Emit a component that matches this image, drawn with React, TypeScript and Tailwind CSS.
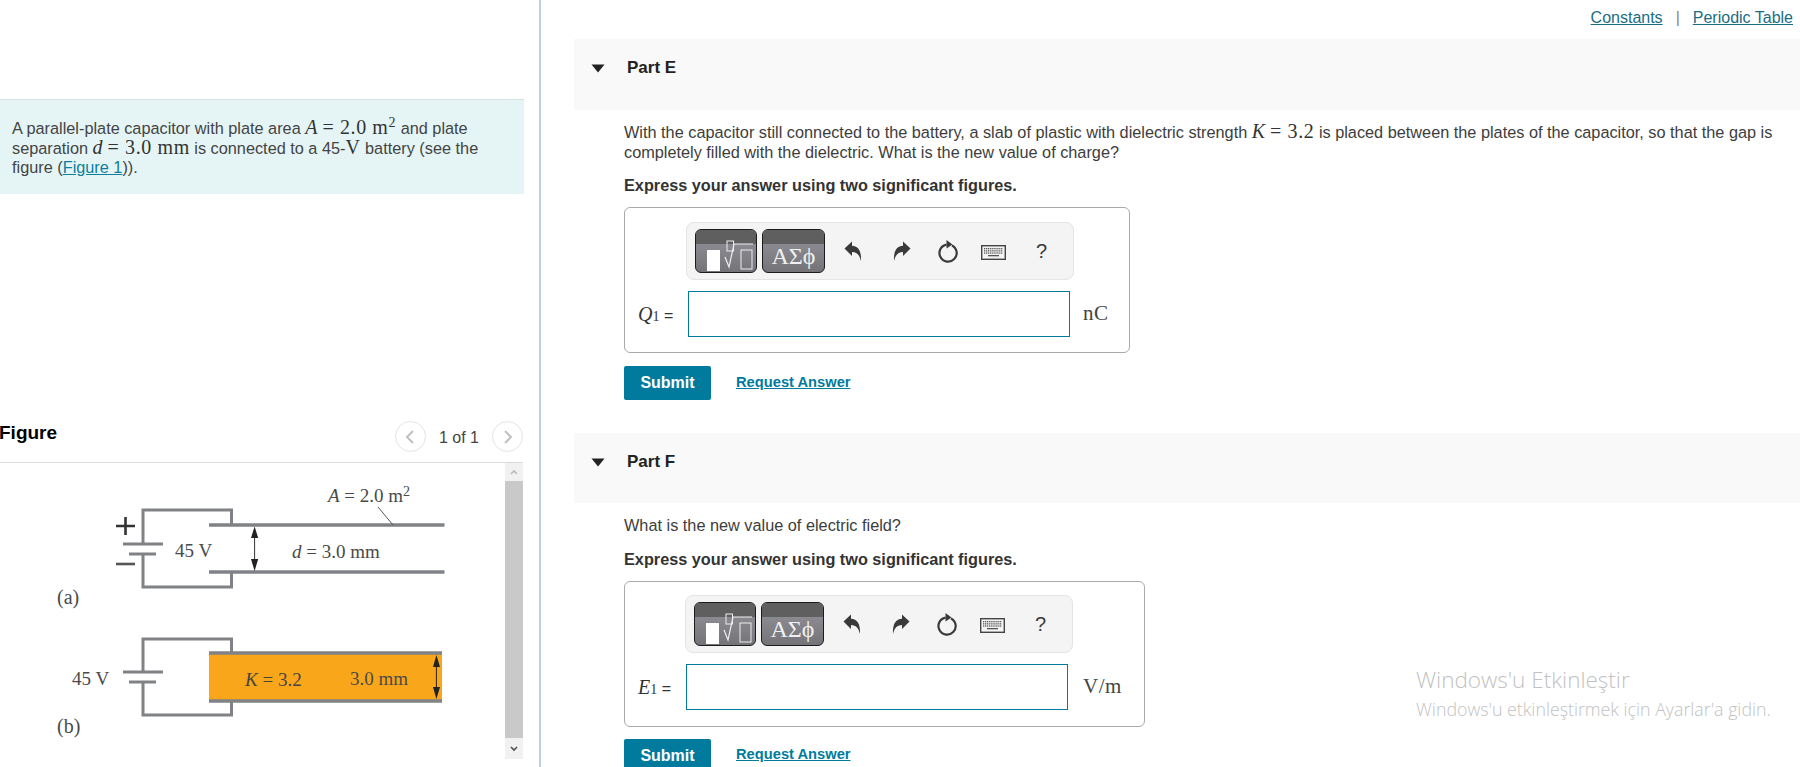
import React from "react";

const Mi = ({ children }: { children: React.ReactNode }) => (
  <span className="italic font-['Liberation_Serif',serif] text-[20px] leading-[0] tracking-[0.5px] text-[#333]">{children}</span>
);
const Mn = ({ children }: { children: React.ReactNode }) => (
  <span className="font-['Liberation_Serif',serif] text-[20px] leading-[0] tracking-[0.6px] text-[#333]">{children}</span>
);

function Undo({ flip = false }: { flip?: boolean }) {
  return (
    <svg width="18" height="22" viewBox="0 0 18 22" className={flip ? "-scale-x-100" : ""}>
      <path d="M0.5 8.5 L8 1.5 V5.8 C14 6 17.5 10.5 17 21 C15.5 15 13 12.2 8 12 V16 Z" fill="#3a3a3a" />
    </svg>
  );
}

function Refresh() {
  return (
    <svg width="22" height="24" viewBox="0 0 22 24">
      <path d="M9.5 5.6 A8.6 8.6 0 1 0 15 6.4" fill="none" stroke="#3a3a3a" strokeWidth="2.2" />
      <path d="M9.5 1 L15.5 5.6 L9.5 9.5 Z" fill="#3a3a3a" />
    </svg>
  );
}

function Keyboard() {
  const dots = [];
  for (let r = 0; r < 3; r++) {
    for (let c = 0; c < 10; c++) {
      dots.push(<rect key={r + "-" + c} x={3 + c * 1.9} y={3 + r * 2.2} width="1.2" height="1.3" fill="#555" />);
    }
  }
  return (
    <svg width="25" height="15" viewBox="0 0 25 15">
      <rect x="0.7" y="0.7" width="23.6" height="13.6" fill="#f4f4f4" stroke="#444" strokeWidth="1.4" />
      {dots}
      <rect x="7" y="10" width="11" height="1.3" fill="#555" />
    </svg>
  );
}

function Toolbar({ ml }: { ml: string }) {
  return (
    <div className={`flex items-center h-[58px] w-[388px] rounded-[8px] border border-[#e4e4e4] bg-[#f4f4f4] pl-[8px] ${ml}`}>
      <div className="relative w-[62px] h-[44px] rounded-[6px] border border-[#1c1c1c] bg-gradient-to-b from-[#96959d] to-[#747478] overflow-hidden">
        <div className="h-[14px] bg-[#5f5f5f]" />
        <svg width="60" height="42" viewBox="0 0 60 42" className="absolute left-0 top-0">
          <rect x="11" y="20" width="13" height="21" fill="#fff" />
          <rect x="31" y="11" width="6.5" height="10" fill="none" stroke="#eee" strokeWidth="1" />
          <path d="M29 27 L33 37 L38 14 H57" fill="none" stroke="#eee" strokeWidth="1.2" />
          <rect x="45" y="20" width="11" height="19" fill="none" stroke="#eee" strokeWidth="1" />
        </svg>
      </div>
      <div className="relative ml-[5px] w-[63px] h-[44px] rounded-[6px] border border-[#1c1c1c] bg-gradient-to-b from-[#96959d] to-[#747478] overflow-hidden">
        <div className="h-[14px] bg-[#5f5f5f]" />
        <span className="absolute left-0 right-0 top-[12px] text-center text-[24px] leading-[28px] text-[#f0f0f0] font-['Liberation_Serif',serif]">ΑΣϕ</span>
      </div>
      <div className="ml-[19px] w-[18px] flex justify-center"><Undo /></div>
      <div className="ml-[31px] w-[18px] flex justify-center"><Undo flip /></div>
      <div className="ml-[26px] w-[22px] flex justify-center"><Refresh /></div>
      <div className="ml-[22px] w-[25px] flex justify-center mt-[3px]"><Keyboard /></div>
      <span className="ml-[30px] text-[20px] text-[#3a3a3a] font-['Liberation_Sans',sans-serif]">?</span>
    </div>
  );
}

function Part({
  name, text, barH, boxPt, submitMt, boxW, tbMl, label, sub, labelW, inputMl, unit, unitMl,
}: {
  name: string; text: React.ReactNode; barH: string; boxPt: string; submitMt: string; boxW: string; tbMl: string;
  label: string; sub: string; labelW: string; inputMl: string; unit: string; unitMl: string;
}) {
  return (
    <section>
      <div className={`flex bg-[#f9f9f9] pt-[19px] ${barH}`}>
        <svg width="14" height="9" viewBox="0 0 14 9" className="ml-[17px] mt-[6px]"><path d="M0.5 0.5H13.5L7 8.5Z" fill="#222" /></svg>
        <span className="ml-[22px] text-[17px] leading-[20px] font-bold text-[#222]">{name}</span>
      </div>
      <div className="pl-[50px]">
        <div className="mt-[13px] text-[16.3px] leading-[19.5px] text-[#3d3d3d]">{text}</div>
        <p className="mt-[13px] text-[16.25px] leading-[20px] font-bold text-[#333]">Express your answer using two significant figures.</p>
        <div className={`mt-[12px] h-[146px] rounded-[6px] border border-[#aaa] ${boxPt} ${boxW}`}>
          <Toolbar ml={tbMl} />
          <div className="flex items-center h-[46px] mt-[11px]">
            <span className={`ml-[13px] whitespace-nowrap text-[#333] text-[16px] ${labelW}`}>
              <span className="italic font-['Liberation_Serif',serif] text-[20px]">{label}</span>
              <span className="font-['Liberation_Serif',serif] text-[14px]">{sub}</span> =
            </span>
            <div className={`h-[46px] w-[382px] border border-[#007b9e] bg-white ${inputMl}`} />
            <span className={`text-[21px] tracking-[0.5px] text-[#444] font-['Liberation_Serif',serif] ${unitMl}`}>{unit}</span>
          </div>
        </div>
        <div className={`flex items-center ${submitMt}`}>
          <button className="w-[87px] h-[34px] rounded-[2px] bg-[#007b9e] text-white text-[16px] font-semibold">Submit</button>
          <a className="ml-[25px] text-[14.7px] font-bold text-[#007b9e] underline -mt-[2px]">Request Answer</a>
        </div>
      </div>
    </section>
  );
}

function Figure() {
  const wire = "#808285";
  const txt = "#4a4a4a";
  const serif = "'Liberation Serif', serif";
  const T = ({ x, y, s = 19, children }: { x: number; y: number; s?: number; children: React.ReactNode }) => (
    <text x={x} y={y} fontSize={s} fill={txt} fontFamily={serif}>{children}</text>
  );
  return (
    <svg width="505" height="296" viewBox="0 1 505 296" className="shrink-0">
      <g fill="none" stroke={wire} strokeWidth="3">
        <path d="M143 82V48H231.5V63" />
        <path d="M143 92V125H231.5V110" />
        <path d="M209 63H444.5M209 110H444.5" strokeWidth="3.5" />
        <path d="M123 82H163M129 92H156" />
        <path d="M143 210V177H231.5V191" />
        <path d="M143 220V253H231.5V239" />
        <path d="M123 210H163M129 220H156" />
      </g>
      <path d="M116 64H135M125.5 55V73" stroke="#333" strokeWidth="2.6" />
      <path d="M116 102H135" stroke="#555" strokeWidth="2.6" />
      <path d="M378 45L393 63" stroke="#555" strokeWidth="1" />
      <path d="M254.6 70V104" stroke="#333" strokeWidth="1" />
      <path d="M254.6 64.5L251 76H258.2ZM254.6 109L251 97H258.2Z" fill="#222" />
      <T x={175} y={95}>45 V</T>
      <text x={292} y={96} fontSize={19} fill={txt} fontFamily={serif}><tspan fontStyle="italic">d</tspan> = 3.0 mm</text>
      <text x={328} y={40} fontSize={19} fill={txt} fontFamily={serif}><tspan fontStyle="italic">A</tspan> = 2.0 m<tspan fontSize={14} dy={-6}>2</tspan></text>
      <T x={57} y={142} s={20}>(a)</T>
      <rect x="209" y="191" width="233" height="48" fill="#faa61a" />
      <path d="M209 191H442M209 239H442" stroke={wire} strokeWidth="3.5" />
      <path d="M436.4 200V230" stroke="#222" strokeWidth="1" />
      <path d="M436.4 193L433 205H440ZM436.4 237L433 225H440Z" fill="#222" />
      <T x={72} y={223}>45 V</T>
      <text x={245} y={224} fontSize={19} fill="#444" fontFamily={serif}><tspan fontStyle="italic">K</tspan> = 3.2</text>
      <T x={350} y={223}>3.0 mm</T>
      <T x={57} y={271} s={20}>(b)</T>
    </svg>
  );
}

export default function App() {
  return (
    <div className="relative flex h-[767px] w-[1800px] overflow-hidden bg-white font-['Liberation_Sans',sans-serif]">
      <aside className="w-[541px] shrink-0 border-r-2 border-[#b8d0e3] pt-[99px]">
        <div className="h-[95px] w-[524px] border-t border-[#d5dfe6] bg-[#e5f5f6] pl-[12px] pt-[19px] text-[16.3px] leading-[19.5px] text-[#444]">
          A parallel-plate capacitor with plate area <Mi>A</Mi> <Mn>= 2.0 m<sup className="text-[14px]">2</sup></Mn> and plate<br />
          separation <Mi>d</Mi> <Mn>= 3.0 mm</Mn> is connected to a 45-<Mn>V</Mn> battery (see the<br />
          figure (<a className="text-[#0f7d9c] underline">Figure 1</a>)).
        </div>
        <div className="flex items-center h-[50px] w-[523px] mt-[219px] border-b border-[#dcdcdc] pb-[2px]">
          <h2 className="-ml-[1px] text-[19px] font-bold text-black -mt-[6px]">Figure</h2>
          <div className="ml-auto flex items-center text-[16px] text-[#444]">
            <span className="flex items-center justify-center w-[31px] h-[31px] rounded-full border border-[#e4e4e4] text-[#bbb]">
              <svg width="10" height="14" viewBox="0 0 10 14"><path d="M8 1L2 7L8 13" fill="none" stroke="#c0c0c0" strokeWidth="2" /></svg>
            </span>
            <span className="mx-[13px] mt-[3px]">1 of 1</span>
            <span className="flex items-center justify-center w-[31px] h-[31px] rounded-full border border-[#e4e4e4]">
              <svg width="10" height="14" viewBox="0 0 10 14"><path d="M2 1L8 7L2 13" fill="none" stroke="#c0c0c0" strokeWidth="2" /></svg>
            </span>
          </div>
        </div>
        <div className="flex w-[523px] h-[296px]">
          <Figure />
          <div className="w-[18px] shrink-0 flex flex-col bg-[#f1f1f1]">
            <div className="h-[18px] flex items-center justify-center">
              <svg width="8" height="6" viewBox="0 0 8 6"><path d="M1 5L4 2L7 5" fill="none" stroke="#bbb" strokeWidth="1.6" /></svg>
            </div>
            <div className="h-[257px] bg-[#c9c9c9]" />
            <div className="h-[21px] flex items-center justify-center">
              <svg width="8" height="6" viewBox="0 0 8 6"><path d="M1 1L4 4L7 1" fill="none" stroke="#505050" strokeWidth="1.6" /></svg>
            </div>
          </div>
        </div>
      </aside>

      <main className="flex-1 min-w-0 pl-[33px]">
        <div className="flex h-[39px] justify-end pr-[7px] pt-[9px] text-[16px] leading-[18px] text-[#888]">
          <a className="text-[#1b6d84] underline">Constants</a>
          <span className="mx-[13px]">|</span>
          <a className="text-[#1b6d84] underline">Periodic Table</a>
        </div>
        <Part
          name="Part E"
          barH="h-[71px]" boxPt="pt-[14px]" submitMt="mt-[13px]"
          text={<>With the capacitor still connected to the battery, a slab of plastic with dielectric strength <Mi>K</Mi> <Mn>= 3.2</Mn> is placed between the plates of the capacitor, so that the gap is<br />completely filled with the dielectric. What is the new value of charge?</>}
          boxW="w-[506px]" tbMl="ml-[61px]" label="Q" sub="1" labelW="w-[48px]" inputMl="ml-[2px]" unit="nC" unitMl="ml-[13px]"
        />
        <div className="h-[33px]" />
        <Part
          name="Part F"
          barH="h-[70px]" boxPt="pt-[13px]" submitMt="mt-[12px]"
          text={<>What is the new value of electric field?</>}
          boxW="w-[521px]" tbMl="ml-[60px]" label="E" sub="1" labelW="w-[48px]" inputMl="ml-[0px]" unit="V/m" unitMl="ml-[15px]"
        />
      </main>

      <div className="absolute left-[1416px] top-[664px] font-['Open_Sans',sans-serif] font-light text-[#c2c2c2] pointer-events-none">
        <div className="text-[22.5px] leading-[32px] whitespace-nowrap">Windows'u Etkinleştir</div>
        <div className="text-[17.8px] leading-[26px] whitespace-nowrap">Windows'u etkinleştirmek için Ayarlar'a gidin.</div>
      </div>
    </div>
  );
}
